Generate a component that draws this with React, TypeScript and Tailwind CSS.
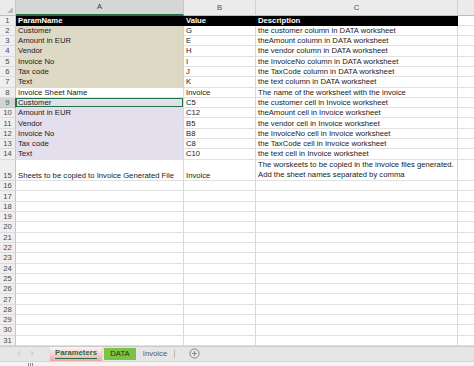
import React from 'react';

type Row = {
  a: string;
  b: string;
  c: React.ReactNode;
  fill?: 'tan' | 'lav';
  head?: boolean;
  tall?: boolean;
};

const ROWS: Row[] = [
  { a: 'ParamName', b: 'Value', c: 'Description', head: true },
  { a: 'Customer', b: 'G', c: 'the customer column in DATA worksheet', fill: 'tan' },
  { a: 'Amount in EUR', b: 'E', c: 'theAmount column in DATA worksheet', fill: 'tan' },
  { a: 'Vendor', b: 'H', c: 'the vendor column in DATA worksheet', fill: 'tan' },
  { a: 'Invoice No', b: 'I', c: 'the InvoiceNo column in DATA worksheet', fill: 'tan' },
  { a: 'Tax code', b: 'J', c: 'the TaxCode column in DATA worksheet', fill: 'tan' },
  { a: 'Text', b: 'K', c: 'the text column in DATA worksheet', fill: 'tan' },
  { a: 'Invoice Sheet Name', b: 'Invoice', c: 'The name of the worksheet with the invoice' },
  { a: 'Customer', b: 'C5', c: 'the customer cell in Invoice worksheet', fill: 'lav' },
  { a: 'Amount in EUR', b: 'C12', c: 'theAmount cell in Invoice worksheet', fill: 'lav' },
  { a: 'Vendor', b: 'B5', c: 'the vendor cell in Invoice worksheet', fill: 'lav' },
  { a: 'Invoice No', b: 'B8', c: 'the InvoiceNo cell in Invoice worksheet', fill: 'lav' },
  { a: 'Tax code', b: 'C8', c: 'the TaxCode cell in Invoice worksheet', fill: 'lav' },
  { a: 'Text', b: 'C10', c: 'the text cell in Invoice worksheet', fill: 'lav' },
  {
    a: 'Sheets to be copied to Invoice Generated File',
    b: 'Invoice',
    c: (
      <span className="block leading-[10px]">
        The worskeets to be copied in the invoice files generated.
        <br />
        Add the sheet names separated by comma
      </span>
    ),
    tall: true,
  },
];

// rows 16..31 are empty
for (let i = 0; i < 16; i++) ROWS.push({ a: '', b: '', c: '' });

const SELECTED_ROW = 9;

const cellBase = 'flex items-end pl-[2px] pb-[0.5px] leading-none whitespace-nowrap overflow-visible border-r border-b';

function rowCells(row: Row, idx: number) {
  const n = idx + 1;
  const h = row.tall ? 'h-[21.5px]' : 'h-[10.3px]';
  const selected = n === SELECTED_ROW;

  let aFill = 'bg-white border-b-[#e1e1e1] border-r-[#d9d9d9]';
  if (row.fill === 'tan') aFill = 'bg-[#ddd9c4] border-b-[#ddd9c4] border-r-[#d4d0bb]';
  if (row.fill === 'lav') aFill = 'bg-[#e4dfec] border-b-[#e4dfec] border-r-[#dad5e2]';

  const normal = 'bg-white border-b-[#e1e1e1] border-r-[#d9d9d9] text-[#1a1a1a]';
  const head = 'bg-black border-b-black border-r-black text-white font-bold';

  return (
    <React.Fragment key={n}>
      <div
        className={`${h} flex items-end justify-center pb-[0.5px] leading-none border-b border-r ${
          selected
            ? 'bg-[#d3d3d3] text-[#217346] border-r-[#217346] border-b-[#c6c6c6]'
            : 'bg-[#efefef] text-[#4a4a4a] border-r-[#c6c6c6] border-b-[#dcdcdc]'
        }`}
      >
        {n}
      </div>
      <div
        className={`${h} ${cellBase} ${row.head ? head : `${aFill} text-[#1a1a1a]`} ${
          selected ? 'shadow-[inset_0_0_0_1px_#217346]' : ''
        }`}
      >
        {row.a}
      </div>
      <div className={`${h} ${cellBase} ${row.head ? head : normal}`}>{row.b}</div>
      <div className={`${h} ${cellBase} ${row.head ? head : normal}`}>{row.c}</div>
      <div className={`${h} border-b border-b-[#e1e1e1] bg-white`} />
    </React.Fragment>
  );
}

function PlusCircle() {
  return (
    <svg width="11" height="11" viewBox="0 0 11 11" fill="none">
      <circle cx="5.5" cy="5.5" r="4.6" stroke="#7a7a7a" strokeWidth="0.9" />
      <path d="M5.5 3.2v4.6M3.2 5.5h4.6" stroke="#7a7a7a" strokeWidth="0.9" />
    </svg>
  );
}

export default function App() {
  return (
    <div className="w-[474px] h-[366px] overflow-hidden bg-white flex flex-col font-['Liberation_Sans',Arial,sans-serif] text-[7.7px]">
      {/* Sheet grid */}
      <div className="grid grid-cols-[16px_168px_72px_202px_1fr]">
        {/* column headers */}
        <div className="h-[15.5px] bg-[#ebebeb] border-r border-b border-r-[#c6c6c6] border-b-[#bdbdbd] flex items-end justify-end pr-[2px] pb-[2px]">
          <svg width="6" height="6" viewBox="0 0 6 6">
            <path d="M6 0V6H0Z" fill="#b9b9b9" />
          </svg>
        </div>
        <div className="h-[15.5px] bg-[#d6d6d6] border-r border-r-[#c6c6c6] border-b-2 border-b-[#217346] flex items-center justify-center pt-[1px] text-[#3a3a3a]">
          A
        </div>
        <div className="h-[15.5px] bg-[#ebebeb] border-r border-b border-r-[#d0d0d0] border-b-[#bdbdbd] flex items-center justify-center pt-[2px] text-[#505050]">
          B
        </div>
        <div className="h-[15.5px] bg-[#ebebeb] border-r border-b border-r-[#d0d0d0] border-b-[#bdbdbd] flex items-center justify-center pt-[2px] text-[#505050]">
          C
        </div>
        <div className="h-[15.5px] bg-[#ebebeb] border-b border-b-[#bdbdbd]" />

        {ROWS.map((r, i) => rowCells(r, i))}
      </div>

      {/* Sheet tabs */}
      <div className="flex-1 flex flex-col">
        <div className="h-[15px] bg-[#e6e6e6] border-t border-t-[#cacaca] flex items-stretch">
          <div className="w-[50px] flex items-center justify-center gap-[9px]">
            <svg width="4" height="5" viewBox="0 0 4 5">
              <path d="M3.5 0.3 0.6 2.5 3.5 4.7" fill="none" stroke="#bdbdbd" strokeWidth="0.8" />
            </svg>
            <svg width="4" height="5" viewBox="0 0 4 5">
              <path d="M0.5 0.3 3.4 2.5 0.5 4.7" fill="none" stroke="#bdbdbd" strokeWidth="0.8" />
            </svg>
          </div>
          <div className="w-[52px] flex items-center justify-center bg-[linear-gradient(to_bottom,#fdf3f3_0%,#f7c9c9_60%,#f0a4a4_100%)] text-[#1d6b3f] font-bold shadow-[0_1px_1px_rgba(0,0,0,0.15)]">
            <span className="border-b border-b-[#217346] pb-[1px] leading-none">Parameters</span>
          </div>
          <div className="w-[2px]" />
          <div className="w-[32px] my-[1px] flex items-center justify-center bg-[#7cc243] text-[#23360f]">
            DATA
          </div>
          <div className="w-[38px] flex items-center justify-center text-[#595959]">Invoice</div>
          <div className="flex items-center">
            <div className="w-px h-[8px] bg-[#b8b8b8]" />
          </div>
          <div className="w-[39px] flex items-center justify-center">
            <PlusCircle />
          </div>
        </div>
        <div className="flex-1 bg-[#f3f3f3] border-t border-t-[#d6d6d6] flex items-start pl-[28px]">
          <div className="flex gap-[1px] mt-[1px]">
            <div className="w-px h-[3px] bg-[#8a8a8a]" />
            <div className="w-px h-[3px] bg-[#8a8a8a]" />
            <div className="w-px h-[3px] bg-[#8a8a8a]" />
          </div>
        </div>
      </div>
    </div>
  );
}
